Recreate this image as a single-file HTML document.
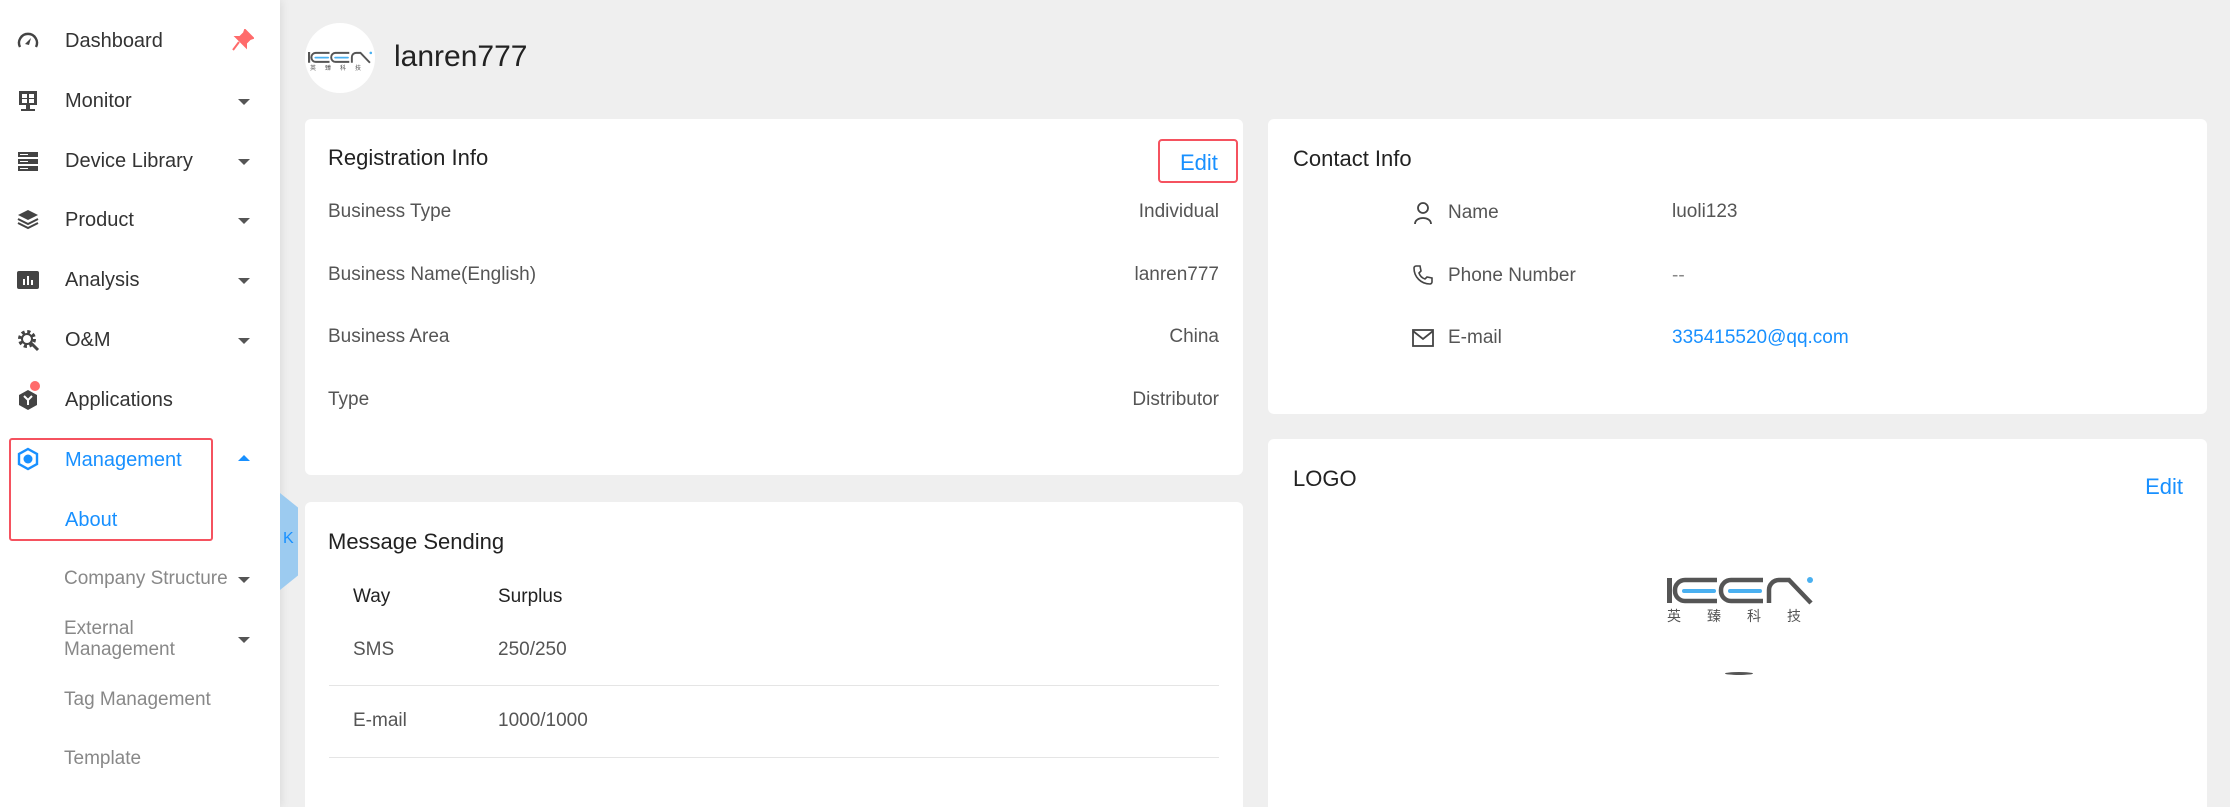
<!DOCTYPE html>
<html><head><meta charset="utf-8"><style>
*{margin:0;padding:0;box-sizing:border-box}
html{width:2230px;height:807px;overflow:hidden}
body{width:2230px;height:807px;overflow:hidden;background:#efefef;font-family:"Liberation Sans","Noto Sans CJK SC",sans-serif;position:relative;color:#333}
.abs{position:absolute;white-space:nowrap}
.side{position:absolute;left:0;top:0;width:280px;height:807px;background:#fff;box-shadow:2px 0 8px rgba(0,0,0,.08)}
.mi{position:absolute;left:65px;font-size:20px;color:#333;line-height:24px}
.ic{position:absolute;left:16px;width:24px;height:24px}
.car{position:absolute;left:238px;width:0;height:0;border-left:6px solid transparent;border-right:6px solid transparent;border-top:6px solid #555}
.sub{position:absolute;left:64px;font-size:19px;color:#888;line-height:22px}
.card{position:absolute;background:#fff;border-radius:6px}
.t{font-size:22px;color:#222}
.lbl{font-size:19px;color:#555}
.val{font-size:19px;color:#555}
.blue{color:#1890ff}
</style></head><body>
<div class="side">
  <svg class="ic" style="top:29px" viewBox="0 0 24 24"><path d="M4 18 A9 9 0 1 1 20 18" fill="none" stroke="#444" stroke-width="2.4"/><path d="M9 15 L15 9 L13 16Z" fill="#444"/></svg>
  <div class="mi" style="top:29px">Dashboard</div>
  <svg class="abs" style="left:232px;top:29px" width="22" height="22" viewBox="0 0 22 22"><path d="M13 1 L21 9 L18 10 L14 14 L14 18 L4 8 L8 8 L12 4Z M7 13 L1 21" fill="#ff6b6b" stroke="#ff6b6b" stroke-width="2"/></svg>
  <svg class="ic" style="top:89px" viewBox="0 0 24 24"><rect x="3" y="2" width="18" height="14" fill="#444"/><rect x="6" y="5" width="5" height="4" fill="#fff"/><rect x="13" y="5" width="5" height="4" fill="#fff"/><rect x="6" y="10" width="5" height="4" fill="#fff"/><rect x="13" y="10" width="5" height="4" fill="#fff"/><rect x="10" y="16" width="4" height="4" fill="#444"/><rect x="5" y="20" width="14" height="2" fill="#444"/></svg>
  <div class="mi" style="top:89px">Monitor</div><div class="car" style="top:99px"></div>
  <svg class="ic" style="top:149px" viewBox="0 0 24 24"><rect x="2" y="3" width="20" height="5" fill="#444"/><rect x="2" y="10" width="20" height="5" fill="#444"/><rect x="2" y="17" width="20" height="5" fill="#444"/><rect x="4" y="5" width="8" height="1" fill="#fff"/><rect x="4" y="12" width="8" height="1" fill="#fff"/><rect x="4" y="19" width="8" height="1" fill="#fff"/></svg>
  <div class="mi" style="top:149px">Device Library</div><div class="car" style="top:159px"></div>
  <svg class="ic" style="top:208px" viewBox="0 0 24 24"><path d="M12 2 L22 7 L12 12 L2 7Z" fill="#444"/><path d="M2 11 L12 16 L22 11 M2 15 L12 20 L22 15" fill="none" stroke="#444" stroke-width="2"/></svg>
  <div class="mi" style="top:208px">Product</div><div class="car" style="top:218px"></div>
  <svg class="ic" style="top:268px" viewBox="0 0 24 24"><rect x="1" y="3" width="22" height="18" rx="2" fill="#444"/><rect x="7" y="11" width="2" height="6" fill="#fff"/><rect x="11" y="8" width="2" height="9" fill="#fff"/><rect x="15" y="12" width="2" height="5" fill="#fff"/></svg>
  <div class="mi" style="top:268px">Analysis</div><div class="car" style="top:278px"></div>
  <svg class="ic" style="top:328px" viewBox="0 0 24 24"><circle cx="11" cy="11" r="7" fill="none" stroke="#444" stroke-width="4" stroke-dasharray="3 2.5"/><circle cx="11" cy="11" r="5" fill="none" stroke="#444" stroke-width="2"/><path d="M14 14 L22 22" stroke="#444" stroke-width="3"/></svg>
  <div class="mi" style="top:328px">O&amp;M</div><div class="car" style="top:338px"></div>
  <svg class="ic" style="top:388px" viewBox="0 0 24 24"><path d="M12 2 L21 7 L21 17 L12 22 L3 17 L3 7Z" fill="#444"/><path d="M8 8 L12 12 L16 8 M12 12 V17" stroke="#fff" stroke-width="2" fill="none"/></svg>
  <div class="abs" style="left:30px;top:381px;width:10px;height:10px;border-radius:50%;background:#ff6b6b"></div>
  <div class="mi" style="top:388px">Applications</div>
  <div class="abs" style="left:9px;top:438px;width:204px;height:103px;border:2px solid #f5525f;border-radius:3px"></div>
  <svg class="ic" style="top:447px" viewBox="0 0 24 24"><path d="M12 2 L21 7 L21 17 L12 22 L3 17 L3 7Z" fill="none" stroke="#1890ff" stroke-width="2.4"/><circle cx="12" cy="12" r="4.5" fill="#1890ff"/></svg>
  <div class="mi" style="top:448px;color:#1890ff">Management</div>
  <div class="abs" style="left:238px;top:455px;width:0;height:0;border-left:6px solid transparent;border-right:6px solid transparent;border-bottom:6px solid #1890ff"></div>
  <div class="mi" style="top:508px;color:#1890ff">About</div>
  <div class="sub" style="top:568px">Company Structure</div><div class="car" style="top:577px"></div>
  <div class="sub" style="top:618px;line-height:21px">External<br>Management</div><div class="car" style="top:637px"></div>
  <div class="sub" style="top:689px">Tag Management</div>
  <div class="sub" style="top:748px">Template</div>
</div>
<div class="abs" style="left:280px;top:493px;width:18px;height:97px;background:#9ccbf0;clip-path:polygon(0 0,100% 15%,100% 85%,0 100%)"></div>
<div class="abs" style="left:283px;top:530px;font-size:16px;color:#1890ff">K</div>

<div class="abs" style="left:305px;top:23px;width:70px;height:70px;border-radius:50%;background:#fff;overflow:hidden">
<svg width="70" height="70" viewBox="0 0 70 70"><g transform="translate(3,29) scale(0.43)">
<rect x="0" y="0" width="5" height="25" fill="#555"/>
<path d="M50 2 H18 a10 10 0 0 0 -10 10 v1 a10 10 0 0 0 10 10 H50" fill="none" stroke="#555" stroke-width="4.5"/>
<path d="M96 2 H64 a10 10 0 0 0 -10 10 v1 a10 10 0 0 0 10 10 H96" fill="none" stroke="#555" stroke-width="4.5"/>
<path d="M102 25 V12 a10 10 0 0 1 10 -10 h10 l22 23" fill="none" stroke="#555" stroke-width="4.5"/>
<circle cx="146" cy="2" r="3" fill="#4ab0f0"/><rect x="15" y="11" width="34" height="4" rx="2" fill="#4ab0f0"/><rect x="61" y="11" width="34" height="4" rx="2" fill="#4ab0f0"/>
</g><text x="5" y="47" font-size="6" fill="#555" font-family="Noto Sans CJK SC" letter-spacing="9">英臻科技</text></svg></div>
<div class="abs" style="left:394px;top:40px;font-size:30px;color:#222">lanren777</div>

<div class="card" style="left:305px;top:119px;width:938px;height:356px">
  <div class="abs t" style="left:23px;top:26px">Registration Info</div>
  <div class="abs" style="left:853px;top:20px;width:80px;height:44px;border:2px solid #f5525f;border-radius:4px"></div>
  <div class="abs blue" style="left:875px;top:31px;font-size:22px">Edit</div>
  <div class="abs lbl" style="left:23px;top:82px">Business Type</div><div class="abs val" style="right:24px;top:82px">Individual</div>
  <div class="abs lbl" style="left:23px;top:145px">Business Name(English)</div><div class="abs val" style="right:24px;top:145px">lanren777</div>
  <div class="abs lbl" style="left:23px;top:207px">Business Area</div><div class="abs val" style="right:24px;top:207px">China</div>
  <div class="abs lbl" style="left:23px;top:270px">Type</div><div class="abs val" style="right:24px;top:270px">Distributor</div>
</div>

<div class="card" style="left:305px;top:502px;width:938px;height:305px;border-radius:6px 6px 0 0">
  <div class="abs t" style="left:23px;top:27px">Message Sending</div>
  <div class="abs" style="left:48px;top:84px;font-size:19px;color:#222">Way</div><div class="abs" style="left:193px;top:84px;font-size:19px;color:#222">Surplus</div>
  <div class="abs val" style="left:48px;top:137px">SMS</div><div class="abs val" style="left:193px;top:137px">250/250</div>
  <div class="abs" style="left:24px;top:183px;width:890px;height:1px;background:#e5e5e5"></div>
  <div class="abs val" style="left:48px;top:208px">E-mail</div><div class="abs val" style="left:193px;top:208px">1000/1000</div>
  <div class="abs" style="left:24px;top:255px;width:890px;height:1px;background:#e5e5e5"></div>
</div>

<div class="card" style="left:1268px;top:119px;width:939px;height:295px">
  <div class="abs t" style="left:25px;top:27px">Contact Info</div>
  <svg class="abs" style="left:145px;top:82px" width="20" height="24" viewBox="0 0 20 24"><circle cx="10" cy="7" r="5" fill="none" stroke="#444" stroke-width="1.8"/><path d="M2 23 C2 15 18 15 18 23" fill="none" stroke="#444" stroke-width="1.8"/></svg>
  <div class="abs lbl" style="left:180px;top:83px">Name</div><div class="abs val" style="left:404px;top:82px">luoli123</div>
  <svg class="abs" style="left:144px;top:145px" width="22" height="22" viewBox="0 0 22 22"><path d="M4 2 L8 2 L9 7 L7 9 C8 12 10 14 13 15 L15 13 L20 14 L20 18 C20 19 19 20 18 20 C9 20 2 13 2 4 C2 3 3 2 4 2Z" fill="none" stroke="#444" stroke-width="1.6"/></svg>
  <div class="abs lbl" style="left:180px;top:146px">Phone Number</div><div class="abs val" style="left:404px;top:146px;color:#888">--</div>
  <svg class="abs" style="left:144px;top:210px" width="22" height="18" viewBox="0 0 22 18"><rect x="1" y="1" width="20" height="16" fill="none" stroke="#444" stroke-width="1.8"/><path d="M1 2 L11 10 L21 2" fill="none" stroke="#444" stroke-width="1.8"/></svg>
  <div class="abs lbl" style="left:180px;top:208px">E-mail</div><div class="abs blue" style="left:404px;top:208px;font-size:19px">335415520@qq.com</div>
</div>

<div class="card" style="left:1268px;top:439px;width:939px;height:368px;border-radius:6px 6px 0 0">
  <div class="abs t" style="left:25px;top:27px">LOGO</div>
  <div class="abs blue" style="right:24px;top:35px;font-size:22px">Edit</div>
  <svg class="abs" style="left:399px;top:137px" width="150" height="48" viewBox="0 0 150 48">
    <rect x="0" y="2" width="5" height="25" fill="#555"/>
    <path d="M50 4 H18 a10 10 0 0 0 -10 10 v1 a10 10 0 0 0 10 10 H50" fill="none" stroke="#555" stroke-width="4.5"/>
    <path d="M96 4 H64 a10 10 0 0 0 -10 10 v1 a10 10 0 0 0 10 10 H96" fill="none" stroke="#555" stroke-width="4.5"/>
    <path d="M102 27 V14 a10 10 0 0 1 10 -10 h10 l22 23" fill="none" stroke="#555" stroke-width="4.5"/>
    <circle cx="143" cy="4" r="3" fill="#4ab0f0"/>
    <rect x="15" y="13" width="34" height="4" rx="2" fill="#4ab0f0"/><rect x="61" y="13" width="34" height="4" rx="2" fill="#4ab0f0"/>
    <text x="0" y="45" font-size="14" fill="#555" font-family="Noto Sans CJK SC" letter-spacing="26">英臻科技</text>
  </svg>
  <div class="abs" style="left:457px;top:233px;width:28px;height:3px;border-radius:50%;background:#555"></div>
</div>
</body></html>
